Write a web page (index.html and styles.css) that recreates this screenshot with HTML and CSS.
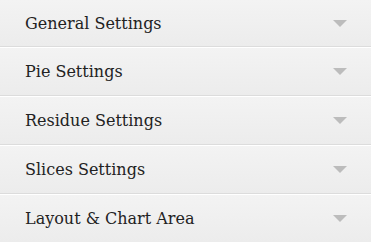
FILE: index.html
```html
<!DOCTYPE html>
<html lang="en">
<head>
    <meta charset="UTF-8">
    <meta name="viewport" content="width=device-width, initial-scale=1.0">
    <title>Chart Settings</title>
    <link rel="stylesheet" href="styles.css">
</head>
<body>
    <div class="accordion">
        <div class="section">
            <span class="title">General Settings</span>
            <span class="arrow"></span>
        </div>
        <div class="section">
            <span class="title">Pie Settings</span>
            <span class="arrow"></span>
        </div>
        <div class="section">
            <span class="title">Residue Settings</span>
            <span class="arrow"></span>
        </div>
        <div class="section">
            <span class="title">Slices Settings</span>
            <span class="arrow"></span>
        </div>
        <div class="section">
            <span class="title">Layout &amp; Chart Area</span>
            <span class="arrow"></span>
        </div>
    </div>
</body>
</html>
```

FILE: styles.css
```css
*{
    padding: 0;
    margin: 0;
    box-sizing: border-box;
}

:root {
    --text-color: #222222;
    --arrow-color: #bcbcbc;
    --line-color: #dcdcdc;
}

body {
    background-color: #f0f0f0;
    font-family: "DejaVu Serif", Georgia, serif;
}

.accordion {
    width: 371px;
}

.section {
    display: flex;
    align-items: center;
    justify-content: space-between;
    height: 49px;
    padding: 0 24px 0 25px;
    background: linear-gradient(to bottom, #f3f3f3, #ececec);
    border-top: 1px solid #ffffff;
    border-bottom: 1px solid var(--line-color);
    color: var(--text-color);
}

.section:first-child {
    border-top: none;
    height: 47px;
}

.title {
    font-size: 16px;
}

.arrow {
    width: 0;
    height: 0;
    border-left: 7px solid transparent;
    border-right: 7px solid transparent;
    border-top: 7px solid var(--arrow-color);
}
```
